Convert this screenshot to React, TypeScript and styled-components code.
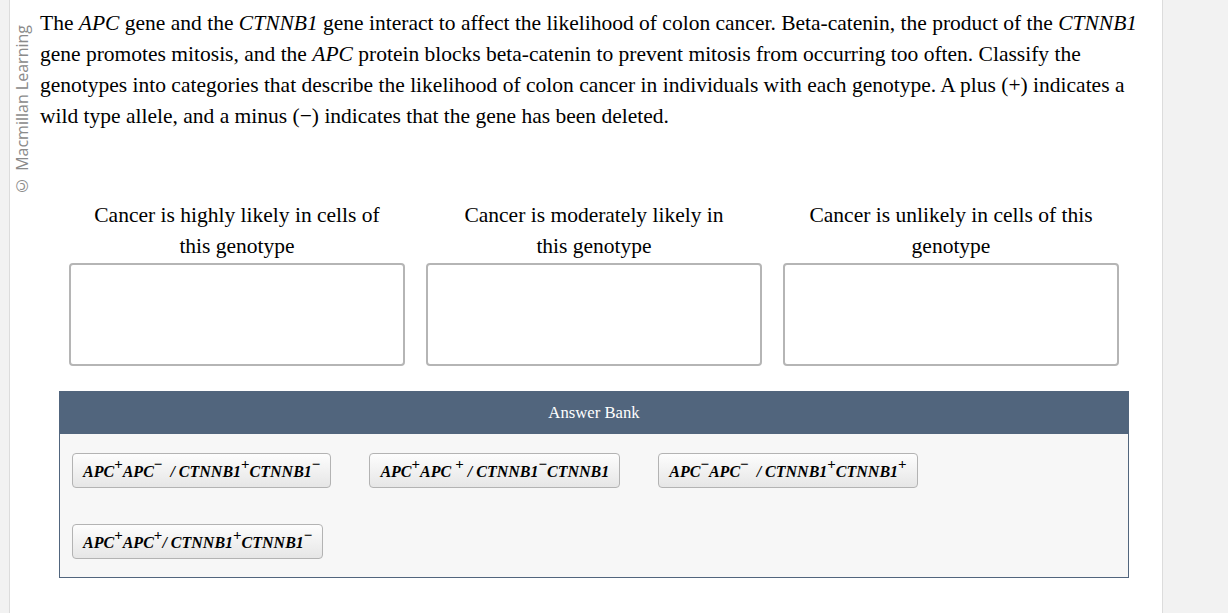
import React from "react";
import styled, { createGlobalStyle } from "styled-components";

const GlobalStyle = createGlobalStyle`
  html, body { margin: 0; padding: 0; background: #ffffff; }
  body { font-family: "Liberation Serif", "Times New Roman", serif; color: #000; }
  * { box-sizing: border-box; }
`;

const Page = styled.div`
  display: flex;
  min-height: 100vh;
  width: 1228px;
`;

const Rail = styled.div<{ $side: "left" | "right"; $width: number }>`
  flex: 0 0 ${(p) => p.$width}px;
  background: #f2f2f2;
  ${(p) => (p.$side === "left" ? "border-right" : "border-left")}: 1px solid #dcdcdc;
`;

const Main = styled.div`
  flex: 1;
  display: flex;
  background: #fff;
`;

const CreditColumn = styled.div`
  flex: 0 0 30px;
  padding: 25px 0 0 3px;
`;

const Credit = styled.div`
  writing-mode: vertical-rl;
  transform: rotate(180deg);
  font-family: "Open Sans", "Liberation Sans", sans-serif;
  font-size: 16px;
  line-height: 18px;
  color: #8a8a8a;
  white-space: nowrap;
`;

const Content = styled.div`
  flex: 1;
  padding: 8px 14px 0 0;
`;

const Prompt = styled.p`
  margin: 0;
  font-size: 21.5px;
  line-height: 31px;
`;

const Columns = styled.div`
  display: grid;
  grid-template-columns: repeat(3, 1fr);
  column-gap: 21px;
  margin: 68px 29px 0 29px;
`;

const Category = styled.div`
  display: flex;
  flex-direction: column;
`;

const CategoryTitle = styled.div`
  font-size: 21.5px;
  line-height: 31px;
  text-align: center;
  padding: 0 23px;
  margin-bottom: 1px;
`;

const DropZone = styled.div`
  height: 103px;
  border: 2px solid #b5b5b5;
  border-radius: 4px;
  background: #fff;
`;

const Bank = styled.div`
  margin: 25px 19px 0 19px;
  border: 1px solid #51657d;
`;

const BankHeader = styled.div`
  height: 42px;
  background: #51657d;
  color: #fff;
  font-size: 16.7px;
  display: flex;
  align-items: center;
  justify-content: center;
`;

const BankBody = styled.div`
  background: #f7f7f7;
  display: flex;
  flex-wrap: wrap;
  column-gap: 38px;
  row-gap: 36px;
  padding: 19px 12px 18px 12px;
`;

const Chip = styled.div`
  height: 35px;
  display: flex;
  align-items: center;
  padding: 2px 10px 0 10px;
  border: 1px solid #b3b3b3;
  border-radius: 4px;
  background: linear-gradient(#fdfdfd, #e6e6e6);
`;

const ChipLabel = styled.span`
  font-size: 16px;
  font-weight: bold;
  font-style: italic;
  white-space: pre;
  line-height: 20px;
`;

const Sup = styled.span`
  font-size: 15px;
  font-style: normal;
  font-weight: bold;
  line-height: 0;
  vertical-align: 8px;
`;

type Part = { t: string; s?: string };

const chips: Part[][] = [
  [{ t: "APC", s: "+" }, { t: "APC", s: "−" }, { t: "  / CTNNB1", s: "+" }, { t: "CTNNB1", s: "−" }],
  [{ t: "APC", s: "+" }, { t: "APC ", s: "+" }, { t: " / CTNNB1", s: "−" }, { t: "CTNNB1" }],
  [{ t: "APC", s: "−" }, { t: "APC", s: "−" }, { t: "  / CTNNB1", s: "+" }, { t: "CTNNB1", s: "+" }],
  [{ t: "APC", s: "+" }, { t: "APC", s: "+" }, { t: "/ CTNNB1", s: "+" }, { t: "CTNNB1", s: "−" }],
];

const categories = [
  "Cancer is highly likely in cells of this genotype",
  "Cancer is moderately likely in this genotype",
  "Cancer is unlikely in cells of this genotype",
];

export default function App() {
  return (
    <>
      <GlobalStyle />
      <Page>
        <Rail $side="left" $width={10} />
        <Main>
          <CreditColumn>
            <Credit>© Macmillan Learning</Credit>
          </CreditColumn>
          <Content>
            <Prompt>
              The <i>APC</i> gene and the <i>CTNNB1</i> gene interact to affect the likelihood of colon cancer.
              Beta-catenin, the product of the <i>CTNNB1</i> gene promotes mitosis, and the <i>APC</i> protein
              blocks beta-catenin to prevent mitosis from occurring too often. Classify the genotypes into
              categories that describe the likelihood of colon cancer in individuals with each genotype. A plus (+)
              indicates a wild type allele, and a minus (−) indicates that the gene has been deleted.
            </Prompt>
            <Columns>
              {categories.map((c) => (
                <Category key={c}>
                  <CategoryTitle>{c}</CategoryTitle>
                  <DropZone />
                </Category>
              ))}
            </Columns>
            <Bank>
              <BankHeader>Answer Bank</BankHeader>
              <BankBody>
                {chips.map((parts, i) => (
                  <Chip key={i}>
                    <ChipLabel>
                      {parts.map((p, j) => (
                        <React.Fragment key={j}>
                          {p.t}
                          {p.s && <Sup>{p.s}</Sup>}
                        </React.Fragment>
                      ))}
                    </ChipLabel>
                  </Chip>
                ))}
              </BankBody>
            </Bank>
          </Content>
        </Main>
        <Rail $side="right" $width={66} />
      </Page>
    </>
  );
}
